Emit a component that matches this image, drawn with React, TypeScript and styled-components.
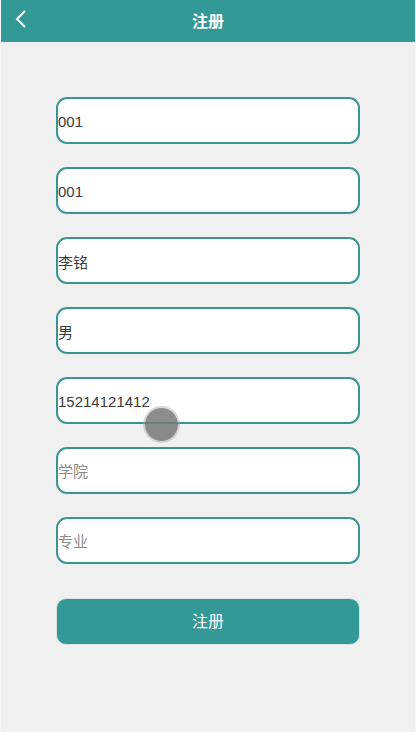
import React from 'react'
import styled, { createGlobalStyle } from 'styled-components'

const GlobalStyle = createGlobalStyle`
    html, body {
        margin: 0;
        padding: 0;
        background: #f0f0f0;
        font-family: "Liberation Sans", Arial, "Noto Sans CJK SC", sans-serif;
    }
    * { box-sizing: border-box; }
`;

const Page = styled.div`
    position: relative;
    width: 416px;
    min-height: 732px;
    background: #f0f0f0;
    border-left: 1px solid #f8f8f8;
    border-right: 1px solid #f8f8f8;
`;

const Header = styled.header`
    position: relative;
    height: 42px;
    padding-bottom: 3px;
    background: #339996;
    display: flex;
    align-items: center;
    justify-content: center;
`;

const BackButton = styled.button`
    position: absolute;
    left: 6px;
    top: 5px;
    width: 28px;
    height: 28px;
    padding: 0;
    border: none;
    background: transparent;
    display: flex;
    align-items: center;
    justify-content: center;
`;

const Title = styled.h1`
    margin: 0;
    color: #ffffff;
    font-size: 16px;
    line-height: 20px;
    font-weight: bold;
    font-family: "Noto Sans CJK SC", sans-serif;
`;

const Form = styled.form`
    display: flex;
    flex-direction: column;
    align-items: center;
    gap: 23px;
    padding-top: 55px;
`;

const Field = styled.input`
    width: 304px;
    height: 47px;
    padding: 2px 0 0 0;
    border: 2px solid #3a9590;
    border-radius: 11px;
    background: #ffffff;
    color: #3a3a3a;
    font-size: 15px;
    font-family: "Liberation Sans", Arial, "Noto Sans CJK SC", sans-serif;
    outline: none;
    caret-color: #000;

    &::placeholder {
        color: #8a8a8a;
    }
`;

const Submit = styled.button`
    margin-top: 11px;
    width: 304px;
    height: 47px;
    padding: 0 0 4px 0;
    border: 1px solid #d8e4e3;
    border-radius: 10px;
    background: #339996;
    color: #ffffff;
    font-size: 16px;
    line-height: 20px;
    font-family: "Noto Sans CJK SC", sans-serif;
`;

const Touch = styled.div`
    position: absolute;
    left: 144px;
    top: 408px;
    width: 33px;
    height: 33px;
    border-radius: 50%;
    background: rgba(120, 120, 120, 0.85);
    box-shadow: 0 0 0 2px rgba(170, 170, 170, 0.45);
`;

const fields = [
    { value: '001' },
    { value: '001' },
    { value: '李铭' },
    { value: '男' },
    { value: '15214121412', focus: true },
    { placeholder: '学院' },
    { placeholder: '专业' },
];

export default function App() {
    return (
        <>
            <GlobalStyle />
            <Page>
                <Header>
                    <BackButton type="button">
                        <svg width="14" height="20" viewBox="0 0 14 20">
                            <path d="M11 2 L3 10 L11 18" fill="none" stroke="#ffffff" strokeWidth="2" />
                        </svg>
                    </BackButton>
                    <Title>注册</Title>
                </Header>
                <Form onSubmit={e => e.preventDefault()}>
                    {fields.map((f, i) => (
                        <Field
                            key={i}
                            defaultValue={f.value}
                            placeholder={f.placeholder}
                            autoFocus={f.focus}
                        />
                    ))}
                    <Submit type="submit">注册</Submit>
                </Form>
                <Touch />
            </Page>
        </>
    );
}
